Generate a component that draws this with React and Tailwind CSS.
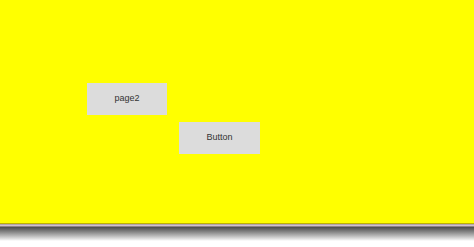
export default function App() {
  return (
    <div className="w-[474px] h-[247px] bg-white flex flex-col overflow-hidden" style={{ fontFamily: '"Liberation Sans", Arial, sans-serif' }}>
      <div className="h-[223px] bg-[#ffff00] flex flex-col">
        <div className="pt-[83px] pl-[87px]">
          <button className="w-[80px] h-[32px] bg-[#dcdcdc] text-[#333333] text-[9px] flex items-center justify-center">page2</button>
        </div>
        <div className="pt-[7px] pl-[179px]">
          <button className="w-[81px] h-[32px] bg-[#dcdcdc] text-[#333333] text-[9px] flex items-center justify-center">Button</button>
        </div>
      </div>
      <div className="h-[1px] bg-[#bfb200]" />
      <div className="h-[1px] bg-[#b4a4ae]" />
      <div className="h-[1px] bg-[#cfc3cb]" />
      <div className="h-[1px] bg-[#8e8288]" />
      <div className="h-[14px] bg-gradient-to-b from-[#4c4c4c] to-white" />
    </div>
  );
}
